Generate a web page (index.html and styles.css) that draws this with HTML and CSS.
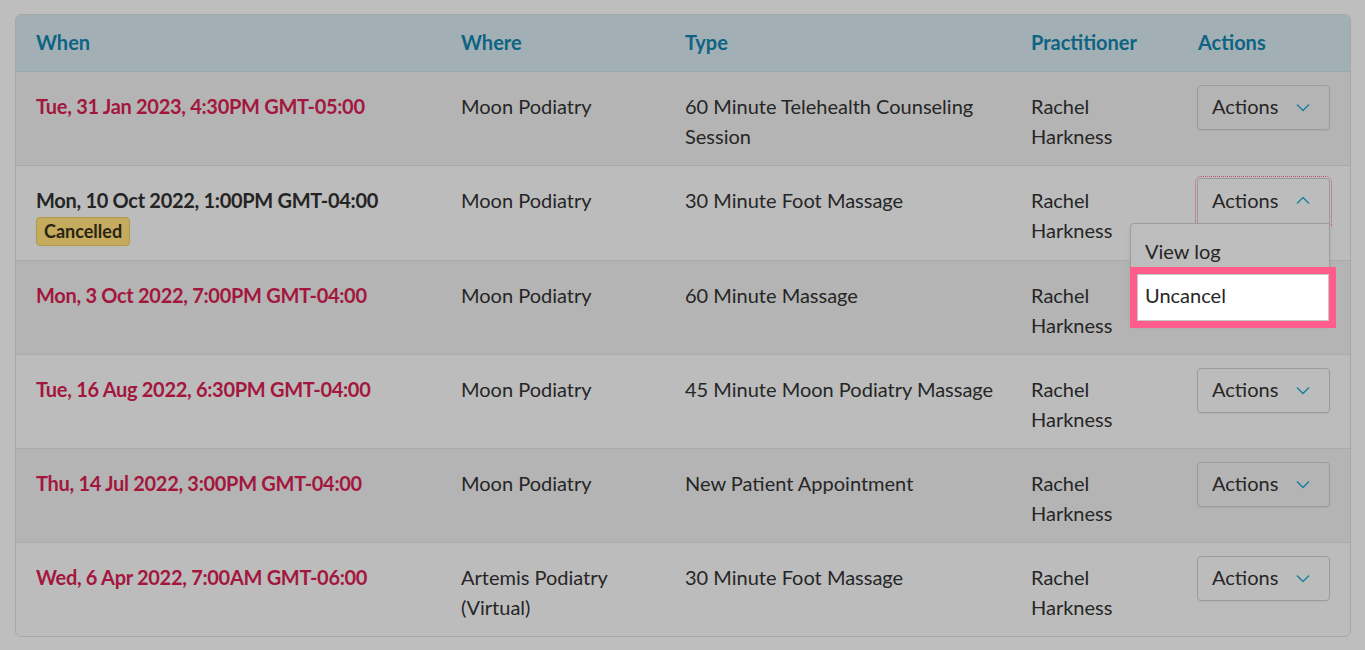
FILE: index.html
```html
<!DOCTYPE html>
<html lang="en">
<head>
<meta charset="utf-8">
<title>Appointments</title>
<link rel="stylesheet" href="styles.css">
</head>
<body>
<div class="card">
  <table class="appts">
    <colgroup>
      <col class="c-when"><col class="c-where"><col class="c-type"><col class="c-prac"><col class="c-act">
    </colgroup>
    <thead>
      <tr><th>When</th><th>Where</th><th>Type</th><th>Practitioner</th><th>Actions</th></tr>
    </thead>
    <tbody>
      <tr class="odd">
        <td class="when">Tue, 31 Jan 2023, 4:30PM GMT-05:00</td>
        <td>Moon Podiatry</td>
        <td>60 Minute Telehealth Counseling Session</td>
        <td>Rachel Harkness</td>
        <td class="act"><button class="btn" type="button"><span>Actions</span><svg class="chev" width="14" height="9" viewBox="0 0 14 9"><polyline points="1,1.5 7,7.5 13,1.5"/></svg></button></td>
      </tr>
      <tr class="even">
        <td class="when cancelled">Mon, 10 Oct 2022, 1:00PM GMT-04:00<br><span class="badge">Cancelled</span></td>
        <td>Moon Podiatry</td>
        <td>30 Minute Foot Massage</td>
        <td>Rachel Harkness</td>
        <td class="act">
          <div class="dd">
            <button class="btn open" type="button"><span>Actions</span><svg class="chev" width="14" height="9" viewBox="0 0 14 9"><polyline points="1,7.5 7,1.5 13,7.5"/></svg></button>
            <ul class="menu">
              <li class="item">View log</li>
              <li class="item hl">Uncancel</li>
            </ul>
          </div>
        </td>
      </tr>
      <tr class="odd">
        <td class="when">Mon, 3 Oct 2022, 7:00PM GMT-04:00</td>
        <td>Moon Podiatry</td>
        <td>60 Minute Massage</td>
        <td>Rachel Harkness</td>
        <td class="act"></td>
      </tr>
      <tr class="even">
        <td class="when">Tue, 16 Aug 2022, 6:30PM GMT-04:00</td>
        <td>Moon Podiatry</td>
        <td>45 Minute Moon Podiatry Massage</td>
        <td>Rachel Harkness</td>
        <td class="act"><button class="btn" type="button"><span>Actions</span><svg class="chev" width="14" height="9" viewBox="0 0 14 9"><polyline points="1,1.5 7,7.5 13,1.5"/></svg></button></td>
      </tr>
      <tr class="odd">
        <td class="when">Thu, 14 Jul 2022, 3:00PM GMT-04:00</td>
        <td>Moon Podiatry</td>
        <td>New Patient Appointment</td>
        <td>Rachel Harkness</td>
        <td class="act"><button class="btn" type="button"><span>Actions</span><svg class="chev" width="14" height="9" viewBox="0 0 14 9"><polyline points="1,1.5 7,7.5 13,1.5"/></svg></button></td>
      </tr>
      <tr class="even last">
        <td class="when">Wed, 6 Apr 2022, 7:00AM GMT-06:00</td>
        <td>Artemis Podiatry (Virtual)</td>
        <td>30 Minute Foot Massage</td>
        <td>Rachel Harkness</td>
        <td class="act"><button class="btn" type="button"><span>Actions</span><svg class="chev" width="14" height="9" viewBox="0 0 14 9"><polyline points="1,1.5 7,7.5 13,1.5"/></svg></button></td>
      </tr>
    </tbody>
  </table>
</div>
</body>
</html>
```
FILE: styles.css
```css
html, body {
  margin: 0;
  padding: 0;
  background: #bebebe;
}
body {
  font-family: Lato, "Open Sans", sans-serif;
  font-size: 20px;
  line-height: 30px;
  color: #262626;
}
.card {
  margin: 14px 14px 0 15px;
  border: 1px solid #a6a6a6;
  border-radius: 6px;
  background: #bcbcbc;
}
.appts {
  width: 100%;
  table-layout: fixed;
  border-collapse: collapse;
}
.c-when { width: 425px; }
.c-where { width: 224px; }
.c-type { width: 346px; }
.c-prac { width: 167px; }
.c-act { width: 172px; }

.appts th {
  background: #a2afb5;
  color: #0d6482;
  font-weight: 700;
  text-align: left;
  padding: 12px 10px 14px 20px;
  border-bottom: 1px solid #98aab1;
}
.appts th:first-child { border-top-left-radius: 5px; }
.appts th:last-child { border-top-right-radius: 5px; }

.appts td {
  vertical-align: top;
  padding: 19px 6px 14px 20px;
  border-top: 1px solid #aaaaaa;
}
.appts tbody tr:first-child td { border-top: none; }
.odd td { background: #b4b4b4; }
.even td { background: #bcbcbc; }
.last td:first-child { border-bottom-left-radius: 5px; }
.last td:last-child { border-bottom-right-radius: 5px; }

.when {
  font-weight: 700;
  color: #a3173e;
  letter-spacing: -0.3px;
}
.when.cancelled { color: #242424; }

.badge {
  display: inline-block;
  margin-top: 1px;
  padding: 0 7px;
  height: 27px;
  line-height: 27px;
  font-size: 18px;
  font-weight: 700;
  letter-spacing: 0;
  color: #2a2414;
  background: #c5ab5e;
  border: 1px solid #b39947;
  border-radius: 4px;
}

.appts td.act { padding-top: 13px; padding-left: 19px; }

.btn {
  display: flex;
  align-items: center;
  justify-content: space-between;
  box-sizing: border-box;
  width: 133px;
  height: 45px;
  padding: 0 19px 3px 14px;
  font: inherit;
  color: #262626;
  background: transparent;
  border: 1px solid #9b9b9b;
  border-radius: 4px;
  box-shadow: 0 1px 1px rgba(0,0,0,0.06);
}
.chev {
  fill: none;
  stroke: #16819c;
  stroke-width: 1.4;
  margin-top: 2px;
}
.dd {
  position: relative;
  width: 133px;
}
.btn.open {
  margin-top: -1px;
  height: 46px;
  border-bottom-left-radius: 0;
  border-bottom-right-radius: 0;
  outline: 1.5px dotted #c0557a;
  outline-offset: 1px;
}
.menu {
  position: absolute;
  top: 45px;
  right: 0;
  width: 200px;
  box-sizing: border-box;
  margin: 0;
  padding: 5px 0 3px;
  list-style: none;
  background: #bdbdbd;
  border: 1px solid #9c9c9c;
  border-radius: 4px 0 4px 4px;
  box-shadow: 0 2px 4px rgba(0,0,0,0.08);
  z-index: 2;
}
.item {
  padding: 7px 14px;
  line-height: 30px;
  color: #262626;
}
.item.hl {
  margin: 1px 0 0 6px;
  padding: 5px 7px 10px;
  background: #ffffff;
  border: 1px solid #c9c9c9;
  outline: 7px solid #ff5c8b;
}
```
